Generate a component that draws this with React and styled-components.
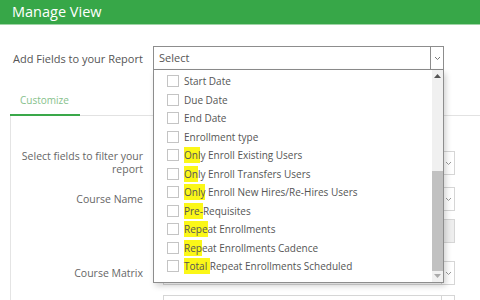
import React from 'react';
import styled, { createGlobalStyle } from 'styled-components';

const GlobalStyle = createGlobalStyle`
  html, body {
    margin: 0;
    padding: 0;
    background: #fff;
    font-family: "Open Sans", "Liberation Sans", sans-serif;
    overflow: hidden;
  }
`;

const Page = styled.div`
  width: 480px;
  height: 300px;
  overflow: hidden;
  background: #fff;
`;

const Header = styled.div`
  height: 24px;
  background: #37a748;
  border-bottom: 1px solid #9fd4a6;
  color: #fff;
  font-size: 14.5px;
  line-height: 24px;
  padding-left: 12px;
`;

const Body = styled.div`
  padding: 21px 0 0 10px;
`;

const FieldRow = styled.div`
  display: flex;
  align-items: center;
  height: 24px;
`;

const FieldLabel = styled.div`
  width: 143px;
  box-sizing: border-box;
  padding-left: 3px;
  font-size: 11px;
  color: #555;
`;

const SelectWrap = styled.div`
  position: relative;
  width: 291px;
  height: 24px;
`;

const SelectBox = styled.div`
  display: flex;
  height: 24px;
  box-sizing: border-box;
  border: 1px solid #8d8d8d;
  background: #fff;
`;

const SelectText = styled.div`
  flex: 1;
  padding-left: 5px;
  font-size: 11px;
  line-height: 22px;
  color: #555;
`;

const ArrowCell = styled.div`
  width: 12px;
  border-left: 1px solid #8d8d8d;
  display: flex;
  align-items: center;
  justify-content: center;
`;

const Menu = styled.div`
  position: absolute;
  top: 24px;
  left: 0;
  width: 291px;
  height: 213px;
  box-sizing: border-box;
  background: #fff;
  border: 1px solid #8d8d8d;
  border-top: none;
  box-shadow: 2px 3px 6px rgba(0, 0, 0, 0.18);
  display: flex;
  z-index: 5;
`;

const MenuList = styled.ul`
  list-style: none;
  margin: 0;
  padding: 2px 0 0 13px;
  flex: 1;
`;

const MenuItem = styled.li`
  display: flex;
  align-items: center;
  height: 18.5px;
  font-size: 10px;
  color: #555;
`;

const Check = styled.span`
  width: 10px;
  height: 10px;
  border: 1px solid #c4c4c4;
  margin-right: 5px;
  flex-shrink: 0;
`;

const Mark = styled.mark`
  background: #fbf718;
  color: inherit;
  padding: 1px 0;
`;

const ScrollBar = styled.div`
  width: 11px;
  background: #f0f0f0;
  display: flex;
  flex-direction: column;
  align-items: center;
`;

const ScrollArrow = styled.div`
  height: 12px;
  display: flex;
  align-items: center;
  justify-content: center;
`;

const ScrollTrack = styled.div`
  flex: 1;
  width: 100%;
  display: flex;
  flex-direction: column;
  padding-top: 89px;
  box-sizing: border-box;
`;

const ScrollThumb = styled.div`
  height: 100px;
  background: #c1c1c1;
`;

const Tabs = styled.div`
  display: flex;
  margin-top: 19px;
  border-bottom: 1px solid #e2e2e2;
`;

const Tab = styled.div`
  width: 70px;
  padding: 4px 0 7px 10px;
  box-sizing: border-box;
  font-size: 10px;
  color: ${p => (p.active ? '#86c18b' : '#888')};
  border-bottom: 2px solid ${p => (p.active ? '#3aa84a' : 'transparent')};
  margin-bottom: -1px;
`;

const Panel = styled.div`
  border-left: 1px solid #e4e4e4;
  padding: 34px 0 0 0;
  display: flex;
  flex-direction: column;
`;

const FormRow = styled.div`
  display: flex;
  align-items: center;
  margin-bottom: ${p => p.gap || 0}px;
`;

const FormLabel = styled.div`
  width: 132px;
  text-align: right;
  font-size: 10.5px;
  line-height: 13px;
  color: #666;
  flex-shrink: 0;
`;

const Control = styled.div`
  margin-left: 20px;
  width: 292px;
  height: 24px;
  box-sizing: border-box;
  border: 1px solid #d6d6d6;
  background: ${p => (p.disabled ? '#eeeeee' : '#fff')};
  display: flex;
  justify-content: flex-end;
`;

const ControlArrow = styled.div`
  width: 12px;
  border-left: 1px solid #d6d6d6;
  display: flex;
  align-items: center;
  justify-content: center;
`;

const Chevron = ({ color = '#888' }) => (
  <svg width="7" height="5" viewBox="0 0 7 5">
    <path d="M1 1 L3.5 3.5 L6 1" fill="none" stroke={color} strokeWidth="1" />
  </svg>
);

const items = [
  [null, 'Start Date'],
  [null, 'Due Date'],
  [null, 'End Date'],
  [null, 'Enrollment type'],
  ['Onl', 'y Enroll Existing Users'],
  ['On', 'ly Enroll Transfers Users'],
  ['Only', ' Enroll New Hires/Re-Hires Users'],
  ['Pre-', 'Requisites'],
  ['Repe', 'at Enrollments'],
  ['Rep', 'eat Enrollments Cadence'],
  ['Total ', 'Repeat Enrollments Scheduled'],
];

export default function App() {
  return (
    <Page>
      <GlobalStyle />
      <Header>Manage View</Header>
      <Body>
        <FieldRow>
          <FieldLabel>Add Fields to your Report</FieldLabel>
          <SelectWrap>
            <SelectBox>
              <SelectText>Select</SelectText>
              <ArrowCell>
                <Chevron color="#777" />
              </ArrowCell>
            </SelectBox>
            <Menu>
              <MenuList>
                {items.map(([hl, rest], i) => (
                  <MenuItem key={i}>
                    <Check />
                    <span>
                      {hl && <Mark>{hl}</Mark>}
                      {rest}
                    </span>
                  </MenuItem>
                ))}
              </MenuList>
              <ScrollBar>
                <ScrollArrow>
                  <svg width="7" height="4" viewBox="0 0 7 4">
                    <path d="M0 4 L3.5 0 L7 4 Z" fill="#555" />
                  </svg>
                </ScrollArrow>
                <ScrollTrack>
                  <ScrollThumb />
                </ScrollTrack>
                <ScrollArrow>
                  <svg width="7" height="4" viewBox="0 0 7 4">
                    <path d="M0 0 L3.5 4 L7 0 Z" fill="#aaa" />
                  </svg>
                </ScrollArrow>
              </ScrollBar>
            </Menu>
          </SelectWrap>
        </FieldRow>
        <Tabs>
          <Tab active>Customize</Tab>
        </Tabs>
        <Panel>
          <FormRow gap={11}>
            <FormLabel>Select fields to filter your report</FormLabel>
            <Control>
              <ControlArrow>
                <Chevron color="#999" />
              </ControlArrow>
            </Control>
          </FormRow>
          <FormRow gap={8}>
            <FormLabel>Course Name</FormLabel>
            <Control>
              <ControlArrow>
                <Chevron color="#999" />
              </ControlArrow>
            </Control>
          </FormRow>
          <FormRow gap={18}>
            <FormLabel />
            <Control disabled />
          </FormRow>
          <FormRow gap={10}>
            <FormLabel>Course Matrix</FormLabel>
            <Control>
              <ControlArrow>
                <Chevron color="#999" />
              </ControlArrow>
            </Control>
          </FormRow>
          <FormRow>
            <FormLabel />
            <Control>
              <ControlArrow />
            </Control>
          </FormRow>
        </Panel>
      </Body>
    </Page>
  );
}
